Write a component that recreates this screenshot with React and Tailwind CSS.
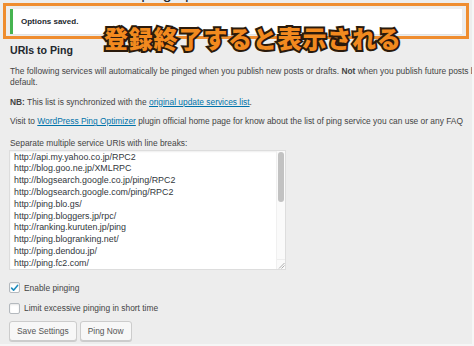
import React from 'react';

const SERVICES = [
    'http://api.my.yahoo.co.jp/RPC2',
    'http://blog.goo.ne.jp/XMLRPC',
    'http://blogsearch.google.co.jp/ping/RPC2',
    'http://blogsearch.google.com/ping/RPC2',
    'http://ping.blo.gs/',
    'http://ping.bloggers.jp/rpc/',
    'http://ranking.kuruten.jp/ping',
    'http://ping.blogranking.net/',
    'http://ping.dendou.jp/',
    'http://ping.fc2.com/',
];

const Checkbox = ({ checked }) => (
    <span className="w-[11px] h-[11px] shrink-0 bg-white border border-[#b4b9be] rounded-[2px] shadow-[inset_0_1px_2px_rgba(0,0,0,0.1)] flex items-center justify-center">
        {checked ? (
            <svg width="10" height="10" viewBox="0 0 10 10">
                <path d="M1.8 5.2 L4 7.4 L8.4 2.2" fill="none" stroke="#1e8cbe" strokeWidth="1.8" strokeLinecap="round" strokeLinejoin="round" />
            </svg>
        ) : null}
    </span>
);

const Button = ({ children }) => (
    <button className="h-[20px] px-[7px] bg-[#f7f7f7] border border-[#cccccc] rounded-[3px] shadow-[0_1px_0_#cccccc] text-[8.4px] text-[#555]">
        {children}
    </button>
);

export default function App() {
    return (
        <div className="relative w-[474px] h-[346px] overflow-hidden bg-[#ededed] border-r-2 border-b-2 border-[#f6f6f6] font-['Liberation_Sans',Arial,sans-serif] text-[#444]">
            {/* page title, cut off by the crop */}
            <div className="h-[3px] overflow-hidden pl-[58px]">
                <div className="-mt-[15px] text-[16px] leading-[18px] text-[#23282d] whitespace-nowrap">WordPress ping optimizer</div>
            </div>

            {/* orange highlight round the notice */}
            <div className="mx-[3px] border-[3px] border-[#ef8d2f] px-[4px] pt-[3px] pb-[2px]">
                <div className="h-[25px] bg-white border-l-[3px] border-[#46b450] shadow-[0_1px_1px_rgba(0,0,0,0.04)] flex items-center pl-[8px]">
                    <span className="text-[8px] font-bold text-[#23282d]">Options saved.</span>
                </div>
            </div>

            <div className="pl-[10px]">
                <h2 className="mt-[4px] text-[10.6px] leading-[14px] font-bold text-[#23282d]">URIs to Ping</h2>

                <p className="mt-[9px] text-[8.4px] leading-[11.4px] whitespace-nowrap">
                    The following services will automatically be pinged when you publish new posts or drafts. <b>Not</b> when you publish future posts by
                    <br />
                    default.
                </p>

                <p className="mt-[8px] text-[8.4px] leading-[11.4px] whitespace-nowrap">
                    <b>NB:</b> This list is synchronized with the <a className="text-[#0073aa] underline">original update services list</a>.
                </p>

                <p className="mt-[8px] text-[8.4px] leading-[11.4px] whitespace-nowrap">
                    Visit to <a className="text-[#0073aa] underline">WordPress Ping Optimizer</a> plugin official home page for know about the list of ping service you can use or any FAQ
                </p>

                <div className="mt-[10px] text-[8.4px] leading-[11px]">Separate multiple service URIs with line breaks:</div>

                {/* services textarea */}
                <div className="mt-[1px] -ml-[1px] w-[277px] h-[120px] bg-white border border-[#dddddd] shadow-[inset_0_1px_2px_rgba(0,0,0,0.07)] flex">
                    <div className="flex-1 pl-[4px] pt-[1px] text-[8.9px] leading-[11.8px] text-[#32373c] overflow-hidden">
                        {SERVICES.map(s => <div key={s}>{s}</div>)}
                    </div>
                    <div className="w-[9px] flex flex-col border-l border-[#f0f0f0] bg-[#fafafa]">
                        <div className="mt-[1px] mx-[1px] h-[50px] rounded-full bg-[#c2c2c2]" />
                        <div className="flex-1" />
                        <div className="h-[10px] border-t border-[#eeeeee] flex items-end justify-end">
                            <svg width="7" height="7" viewBox="0 0 7 7">
                                <path d="M1 6.5 L6.5 1 M3.5 6.5 L6.5 3.5" stroke="#999" strokeWidth="0.8" />
                            </svg>
                        </div>
                    </div>
                </div>

                <label className="mt-[12px] flex items-center gap-[4px] text-[8.4px] -ml-[1px]">
                    <Checkbox checked />
                    <span>Enable pinging</span>
                </label>

                <label className="mt-[8px] flex items-center gap-[4px] text-[8.4px] -ml-[1px]">
                    <Checkbox />
                    <span>Limit excessive pinging in short time</span>
                </label>

                <div className="mt-[6px] -ml-[1px] flex gap-[3px]">
                    <Button>Save Settings</Button>
                    <Button>Ping Now</Button>
                </div>
            </div>

            {/* annotation over the screenshot */}
            <div className="absolute left-[104px] top-[26px] text-[24px] leading-none font-black tracking-[0.8px] text-[#f28a1f] font-['Noto_Sans_CJK_JP',sans-serif] [-webkit-text-stroke:4px_#2a1a0c] [paint-order:stroke_fill] whitespace-nowrap">
                登録終了すると表示される
            </div>
        </div>
    );
}
